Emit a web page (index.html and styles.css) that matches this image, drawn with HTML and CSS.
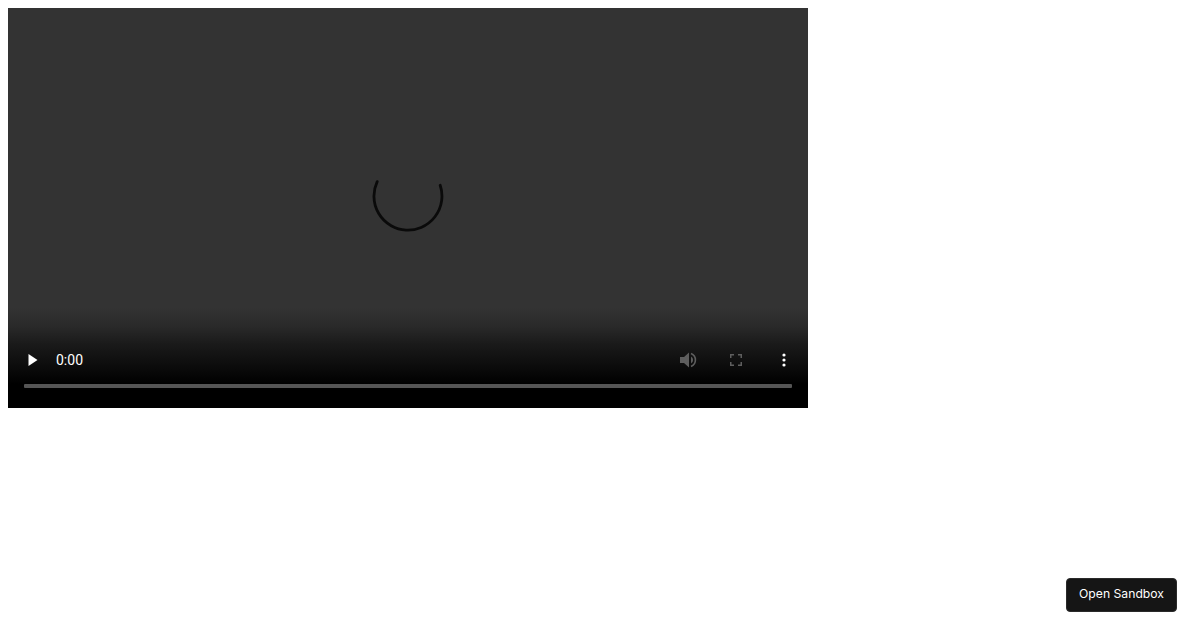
FILE: index.html
```html
<!DOCTYPE html>
<html lang="en">
<head>
<meta charset="utf-8">
<title>Video</title>
<link rel="stylesheet" href="styles.css">
</head>
<body>
<div class="player">
  <svg class="spinner" width="72" height="72" viewBox="0 0 72 72"><path d="M5.200 21.600A34 34 0 1 0 68.200 25.300" fill="none" stroke="#0a0a0a" stroke-width="2.800" stroke-linecap="round"/></svg>
  <div class="stage"></div>
  <div class="controls">
    <svg class="icon-play" width="10" height="12" viewBox="0 0 10 12"><path d="M0.500 0V12L9.500 6Z" fill="#fff"/></svg>
    <span class="time">0:00</span>
    <span class="spacer"></span>
    <svg class="icon-vol" width="18" height="16" viewBox="0 0 18 16"><path d="M1 5V11H5L10 15.500V0.500L5 5Z" fill="#5e5e5e"/><path d="M12 4.500A4 4 0 0 1 12 11.500Z" fill="#5e5e5e"/><path d="M12 1.500A7 7 0 0 1 12 14.500" fill="none" stroke="#5e5e5e" stroke-width="1.600"/></svg>
    <svg class="icon-full" width="12" height="12" viewBox="0 0 12 12"><path d="M0.750 4V0.750H4M8 0.750H11.250V4M11.250 8V11.250H8M4 11.250H0.750V8" fill="none" stroke="#5e5e5e" stroke-width="1.500"/></svg>
    <svg class="icon-more" width="4" height="14" viewBox="0 0 4 14"><circle cx="2" cy="2" r="1.600" fill="#fff"/><circle cx="2" cy="7" r="1.600" fill="#fff"/><circle cx="2" cy="12" r="1.600" fill="#fff"/></svg>
  </div>
  <div class="timeline"></div>
</div>
<button class="sandbox" type="button">Open Sandbox</button>
</body>
</html>
```
FILE: styles.css
```css
html, body {
  margin: 0;
  padding: 0;
  background: #fff;
}
body {
  padding: 8px;
  height: 614px;
  overflow: hidden;
}
.player {
  position: relative;
  width: 800px;
  height: 400px;
  display: flex;
  flex-direction: column;
  background: linear-gradient(to bottom, #333 0, #333 300px, #2a2a2a 318px, #1a1a1a 336px, #0c0c0c 358px, #000 376px, #000 100%);
}
.spinner {
  position: absolute;
  left: 364px;
  top: 152px;
}
.stage {
  flex: 1;
}
.controls {
  display: flex;
  align-items: center;
  height: 48px;
  padding: 0 22px 0 20px;
}
.icon-play {
  margin-right: 18px;
}
.time {
  font: 14px/20px Roboto, "Liberation Sans", sans-serif;
  color: #fff;
}
.spacer {
  flex: 1;
}
.icon-vol {
  margin-right: 33px;
}
.icon-full {
  margin-right: 40px;
}
.timeline {
  height: 4px;
  margin: 0 16px 20px;
  border-radius: 1px;
  background: #555;
}
.sandbox {
  position: fixed;
  left: 1066px;
  top: 578px;
  width: 111px;
  height: 34px;
  padding: 0 0 2px;
  border: 1px solid #2a2a2a;
  border-radius: 4px;
  background: #151515;
  color: #fff;
  font: 12.200px/20px Inter, "Liberation Sans", sans-serif;
}
```
